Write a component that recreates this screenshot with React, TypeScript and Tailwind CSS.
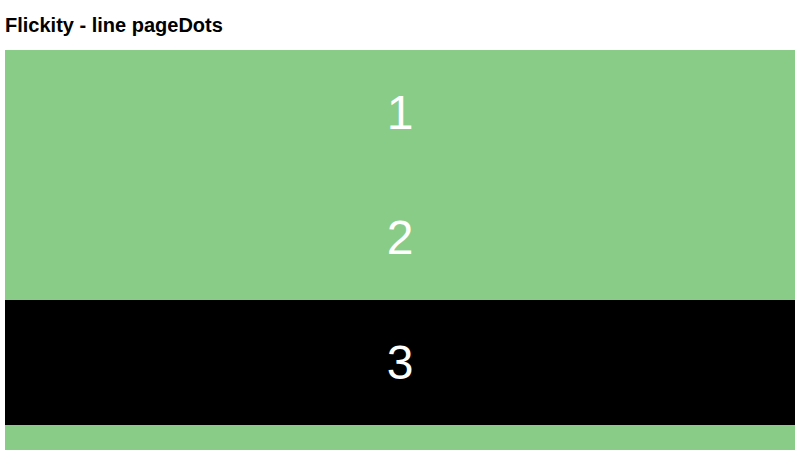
const cells = [
  { n: 1, bg: 'bg-[#88cc88]' },
  { n: 2, bg: 'bg-[#88cc88]' },
  { n: 3, bg: 'bg-black' },
  { n: 4, bg: 'bg-[#88cc88]' },
];

export default function App() {
  return (
    <div className="h-[450px] overflow-hidden bg-white px-[5px] font-['Liberation_Sans',Arial,sans-serif]">
      <h1 className="pt-[14px] pb-[13px] text-[20px] leading-[23px] font-bold text-black">
        Flickity - line pageDots
      </h1>
      <div className="flex flex-col">
        {cells.map((c) => (
          <div
            key={c.n}
            className={`flex h-[125px] items-center justify-center text-[48px] leading-none text-white ${c.bg}`}
          >
            {c.n}
          </div>
        ))}
      </div>
    </div>
  );
}
